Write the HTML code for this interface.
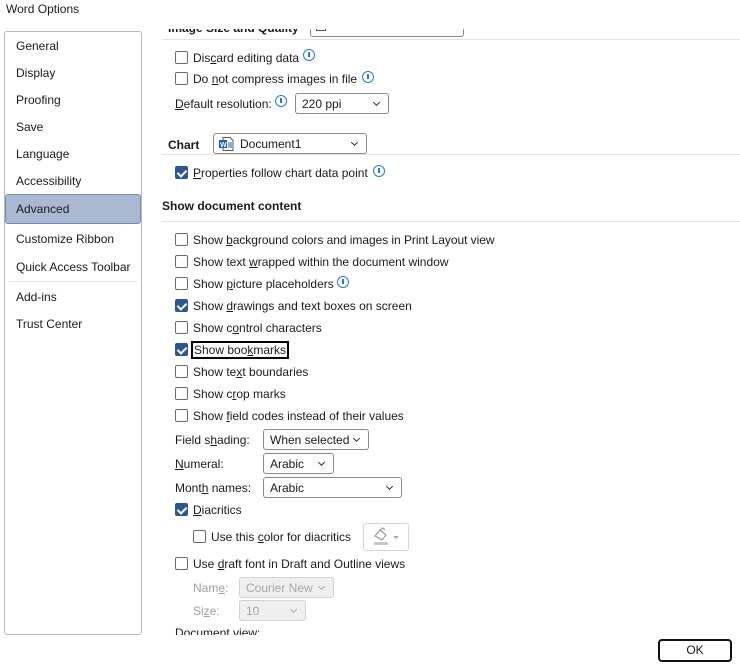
<!DOCTYPE html>
<html><head><meta charset="utf-8"><style>
*{margin:0;padding:0;box-sizing:border-box}
body{width:740px;height:670px;background:#fff;font-family:"Liberation Sans",sans-serif;font-size:12px;color:#1a1a1a;position:relative;overflow:hidden}
.a{position:absolute;white-space:nowrap}
.t{line-height:14px}
.side{position:absolute;left:4px;top:31px;width:138px;height:604px;border:1px solid #b8b8b8;border-radius:3px}
.si{position:absolute;left:16px;font-size:12px}
.sel{position:absolute;left:5px;top:194px;width:136px;height:30px;background:#a9b9d1;border:1px solid #6d8fc1;border-radius:3px}
.cb{position:absolute;width:13px;height:13px;border:1px solid #6b6b6b;border-radius:2px;background:#fff}
.cb.c{background:#2b5797;border-color:#2b5797}
.cb.c::after{content:"";position:absolute;left:3px;top:1px;width:4px;height:7px;border:solid #fff;border-width:0 2px 2px 0;transform:rotate(45deg)}
.hr{position:absolute;height:1px;background:#e3e3e3}
.dd{position:absolute;height:21px;border:1px solid #8a8a8a;border-radius:3px;background:#fff;padding-left:6px;line-height:20px}
.dd::after{content:"";position:absolute;right:9px;top:6px;width:4px;height:4px;border:solid #333;border-width:0 1px 1px 0;transform:rotate(45deg)}
.dd.dis{background:#efefef;border-color:#d2d2d2;color:#a6a6a6}
.dd.dis::after{border-color:#aaa}
.i{position:absolute;width:12px;height:12px;border:1.5px solid #1f7bd6;border-radius:50%}
.i::after{content:"";position:absolute;left:3.5px;top:2px;width:2px;height:5px;background:#1f7bd6}
u{text-decoration:underline}
.b{font-weight:bold}
.g{color:#a0a0a0}
</style></head><body>
<div class="a t" style="left:6px;top:2px">Word Options</div>
<div class="side"></div>
<div class="sel"></div>
<div class="si a" style="top:39px">General</div>
<div class="si a" style="top:66px">Display</div>
<div class="si a" style="top:93px">Proofing</div>
<div class="si a" style="top:120px">Save</div>
<div class="si a" style="top:147px">Language</div>
<div class="si a" style="top:174px">Accessibility</div>
<div class="si a" style="top:202px">Advanced</div>
<div class="si a" style="top:232px">Customize Ribbon</div>
<div class="si a" style="top:260px">Quick Access Toolbar</div>
<div class="hr" style="left:9px;top:281px;width:128px"></div>
<div class="si a" style="top:290px">Add-ins</div>
<div class="si a" style="top:317px">Trust Center</div>

<div class="a" style="left:162px;top:29px;height:10px;width:320px;overflow:hidden">
 <div class="a b" style="left:6px;top:-8px">Image Size and Quality</div>
 <div class="a" style="left:148px;top:-12px;width:154px;height:20px;border:1px solid #8a8a8a;border-radius:3px"></div>
 <div class="a" style="left:154px;top:-6px;width:10px;height:8px;border:1px solid #555;border-top:none"></div>
 <div class="a" style="left:155px;top:-6px;width:5px;height:3px;background:#185abd"></div>
</div>
<div class="hr" style="left:162px;top:39px;width:578px"></div>

<div class="cb" style="left:175px;top:51px"></div><div class="a t" style="left:193px;top:51px">Dis<u>c</u>ard editing data</div><div class="i" style="left:303px;top:49px"></div>
<div class="cb" style="left:175px;top:72px"></div><div class="a t" style="left:193px;top:72px">Do <u>n</u>ot compress images in file</div><div class="i" style="left:362px;top:71px"></div>
<div class="a t" style="left:175px;top:97px"><u>D</u>efault resolution:</div><div class="i" style="left:275px;top:95px"></div>
<div class="dd" style="left:295px;top:93px;width:94px">220 ppi</div>

<div class="a t b" style="left:168px;top:138px">Chart</div>
<div class="dd" style="left:213px;top:133px;width:154px;padding-left:26px">Document1</div>
<svg class="a" style="left:219px;top:137px" width="15" height="14" viewBox="0 0 15 14"><path d="M4 .5h7l3 3v10H4z" fill="#fff" stroke="#555"/><rect x="0" y="3" width="8" height="8" fill="#185abd"/><text x="1" y="10" font-size="7" fill="#fff" font-family="Liberation Sans" font-weight="bold">W</text><path d="M9 6h4M9 8h4M9 10h4" stroke="#185abd"/></svg>
<div class="hr" style="left:162px;top:154px;width:578px"></div>
<div class="cb c" style="left:175px;top:166px"></div><div class="a t" style="left:193px;top:166px"><u>P</u>roperties follow chart data point</div><div class="i" style="left:373px;top:165px"></div>

<div class="a t b" style="left:162px;top:199px">Show document content</div>
<div class="hr" style="left:162px;top:221px;width:578px"></div>

<div class="cb" style="left:175px;top:233px"></div><div class="a t" style="left:193px;top:233px;letter-spacing:-0.05px">Show <u>b</u>ackground colors and images in Print Layout view</div>
<div class="cb" style="left:175px;top:255px"></div><div class="a t" style="left:193px;top:255px">Show text <u>w</u>rapped within the document window</div>
<div class="cb" style="left:175px;top:277px"></div><div class="a t" style="left:193px;top:277px">Show <u>p</u>icture placeholders</div><div class="i" style="left:337px;top:276px"></div>
<div class="cb c" style="left:175px;top:299px"></div><div class="a t" style="left:193px;top:299px">Show <u>d</u>rawings and text boxes on screen</div>
<div class="cb" style="left:175px;top:321px"></div><div class="a t" style="left:193px;top:321px">Show c<u>o</u>ntrol characters</div>
<div class="cb c" style="left:175px;top:343px"></div><div class="a t" style="left:191px;top:341px;border:2px solid #000;padding:0 1px;line-height:14px;height:18px">Show boo<u>k</u>marks</div>
<div class="cb" style="left:175px;top:365px"></div><div class="a t" style="left:193px;top:365px">Show te<u>x</u>t boundaries</div>
<div class="cb" style="left:175px;top:387px"></div><div class="a t" style="left:193px;top:387px">Show c<u>r</u>op marks</div>
<div class="cb" style="left:175px;top:409px"></div><div class="a t" style="left:193px;top:409px">Show <u>f</u>ield codes instead of their values</div>

<div class="a t" style="left:175px;top:433px">Field s<u>h</u>ading:</div><div class="dd" style="left:263px;top:429px;width:106px">When selected</div>
<div class="a t" style="left:175px;top:457px"><u>N</u>umeral:</div><div class="dd" style="left:263px;top:453px;width:71px">Arabic</div>
<div class="a t" style="left:175px;top:481px">Mont<u>h</u> names:</div><div class="dd" style="left:263px;top:477px;width:139px">Arabic</div>
<div class="cb c" style="left:175px;top:503px"></div><div class="a t" style="left:193px;top:503px"><u>D</u>iacritics</div>
<div class="cb" style="left:193px;top:530px"></div><div class="a t" style="left:211px;top:530px">Use this <u>c</u>olor for diacritics</div>
<div class="a" style="left:363px;top:523px;width:46px;height:28px;border:1px solid #d6d6d6;border-radius:3px"></div>
<svg class="a" style="left:372px;top:527px" width="30" height="20" viewBox="0 0 30 20"><path d="M3 9l5-6 6 5-4 5z M8 3l3-2 2 2" fill="none" stroke="#999" stroke-width="1.2"/><rect x="2" y="15" width="14" height="3" fill="#c8c8c8"/><path d="M21 9h6l-3 3z" fill="#aaa"/></svg>
<div class="cb" style="left:175px;top:557px"></div><div class="a t" style="left:193px;top:557px">Use <u>d</u>raft font in Draft and Outline views</div>
<div class="a t g" style="left:193px;top:581px">Nam<u>e</u>:</div><div class="dd dis" style="left:239px;top:577px;width:95px">Courier New</div>
<div class="a t g" style="left:193px;top:604px">Si<u>z</u>e:</div><div class="dd dis" style="left:239px;top:600px;width:67px">10</div>
<div class="a" style="left:162px;top:624px;height:11px;width:200px;overflow:hidden"><div class="a t" style="left:13px;top:2px">Document view:</div></div>

<div class="a" style="left:658px;top:639px;width:74px;height:23px;border:2px solid #111;border-radius:4px;text-align:center;line-height:19px">OK</div>
</body></html>
